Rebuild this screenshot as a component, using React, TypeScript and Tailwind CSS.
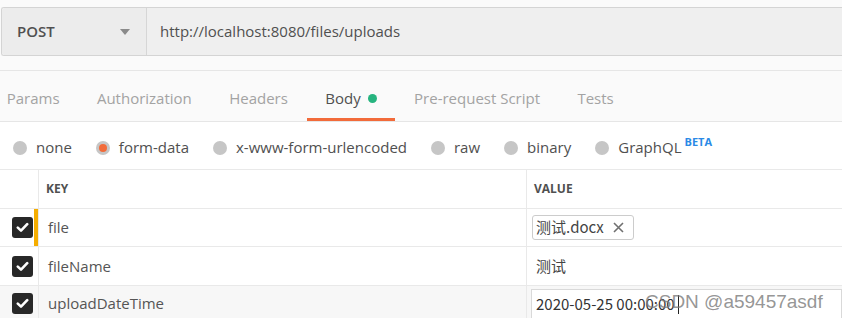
import { useState } from "react";

const TABS = ["Params", "Authorization", "Headers", "Body", "Pre-request Script", "Tests"];

const BODY_TYPES = ["none", "form-data", "x-www-form-urlencoded", "raw", "binary", "GraphQL"];

interface Row {
  key: string;
  value: string;
  kind: "file" | "text" | "input";
}

const ROWS: Row[] = [
  { key: "file", value: "测试.docx", kind: "file" },
  { key: "fileName", value: "测试", kind: "text" },
  { key: "uploadDateTime", value: "2020-05-25 00:00:00", kind: "input" },
];

const cjk = "font-['Noto_Sans_CJK_SC','Liberation_Sans',sans-serif]";

function Check() {
  return (
    <div className="w-[21px] h-[21px] rounded-[3px] bg-[#282828] flex items-center justify-center">
      <svg width="13" height="11" viewBox="0 0 13 11" fill="none">
        <path d="M1.8 5.6 L5 8.6 L11.2 2.2" stroke="#fff" strokeWidth="2.6" strokeLinecap="round" strokeLinejoin="round" />
      </svg>
    </div>
  );
}

export default function App() {
  const [active] = useState("Body");
  const [bodyType] = useState("form-data");

  return (
    <div className="relative w-[842px] h-[318px] overflow-hidden bg-white text-[#505050] font-['Open_Sans','Liberation_Sans',sans-serif]">
      {/* 请求地址栏 */}
      <div className="h-[71px] bg-[#fafafa] border-b border-[#e6e6e6] pt-[7px]">
        <div className="ml-[1px] h-[49px] flex border-y border-l border-[#d4d4d4] rounded-l-[3px] overflow-hidden">
          <div className="w-[145px] bg-[#ececec] border-r border-[#d6d6d6] flex items-center justify-between pl-[15px] pr-[16px]">
            <span className="text-[15px] font-semibold">POST</span>
            <svg width="10" height="6" viewBox="0 0 10 6">
              <path d="M0 0 H10 L5 6 Z" fill="#8a8a8a" />
            </svg>
          </div>
          <div className="flex-1 bg-[#efefef] flex items-center pl-[13px] text-[15px] text-[#505050]">
            http://localhost:8080/files/uploads
          </div>
        </div>
      </div>

      {/* 标签页 */}
      <div className="h-[51px] bg-[#fafafa] border-b border-[#e6e6e6] flex -ml-3">
        {TABS.map((t) => (
          <div
            key={t}
            className={
              "h-[50px] px-[18.7px] pt-[8px] flex items-center text-[15px] border-b-[3px] " +
              (t === active ? "border-[#f26b3a] text-[#505050]" : "border-transparent text-[#a3a3a3]")
            }
          >
            {t}
            {t === "Body" && <span className="ml-[7px] w-[9px] h-[9px] rounded-full bg-[#26b47f]" />}
          </div>
        ))}
      </div>

      {/* Body 类型 */}
      <div className="h-[48px] border-b border-[#e9e9e9] flex items-center pl-[13px] pt-[4px] text-[15px]">
        {BODY_TYPES.map((b) => (
          <div key={b} className="flex items-center mr-[24px]">
            <span className="w-[14px] h-[14px] rounded-full bg-[#c6c6c6] flex items-center justify-center">
              {b === bodyType && <span className="w-[8px] h-[8px] rounded-full bg-[#f26b3a]" />}
            </span>
            <span className="ml-[9px]">{b}</span>
            {b === "GraphQL" && (
              <span className="ml-[3px] self-start -mt-[2px] text-[11px] font-bold text-[#2a8ae6]">BETA</span>
            )}
          </div>
        ))}
      </div>

      {/* 表头 */}
      <div className="h-[39px] border-b border-[#e9e9e9] flex text-[12px] font-bold">
        <div className="w-[39px] border-r border-[#e9e9e9]" />
        <div className="w-[488px] border-r border-[#e9e9e9] flex items-center pl-[7px]">KEY</div>
        <div className="flex-1 flex items-center pl-[7px]">VALUE</div>
      </div>

      {/* 参数行 */}
      {ROWS.map((r, i) => (
        <div
          key={r.key}
          className={
            "flex border-b border-[#e9e9e9] text-[15px] " +
            (i === 0 ? "h-[38px]" : i === 1 ? "h-[39px]" : "h-[35px] bg-[#f7f7f7]")
          }
        >
          <div className="w-[39px] border-r border-[#e9e9e9] flex items-center relative">
            <div className="ml-[12px]">
              <Check />
            </div>
            {i === 0 && <div className="absolute right-0 top-0 bottom-0 w-[4px] bg-[#f5ad00]" />}
          </div>
          <div className="w-[488px] border-r border-[#e9e9e9] flex items-center pl-[9px] text-[#555]">{r.key}</div>
          <div className="flex-1 flex items-center">
            {r.kind === "file" && (
              <div className={"ml-[5px] w-[102px] h-[25px] border border-[#cccccc] rounded-[3px] bg-white flex items-center justify-between pl-[3px] pr-[9px] text-[15px] text-[#444] " + cjk}>
                <span>{r.value}</span>
                <svg width="11" height="11" viewBox="0 0 11 11">
                  <path d="M1 1 L10 10 M10 1 L1 10" stroke="#707070" strokeWidth="1.6" />
                </svg>
              </div>
            )}
            {r.kind === "text" && <span className={"ml-[9px] text-[15px] text-[#444] " + cjk}>{r.value}</span>}
            {r.kind === "input" && (
              <div className={"ml-[4px] mt-[2px] flex-1 h-[31px] border border-[#d9d9d9] bg-white flex items-center pl-[4px] text-[15px] text-[#333] " + cjk}>
                {r.value}
                <span className="ml-[3px] w-px h-[19px] bg-[#222]" />
              </div>
            )}
          </div>
        </div>
      ))}

      {/* 水印 */}
      <div className="absolute left-[645px] top-[292px] text-[19px] leading-none text-[#7a7a7a]/80 font-['Liberation_Sans',sans-serif] pointer-events-none">
        CSDN @a59457asdf
      </div>
    </div>
  );
}
